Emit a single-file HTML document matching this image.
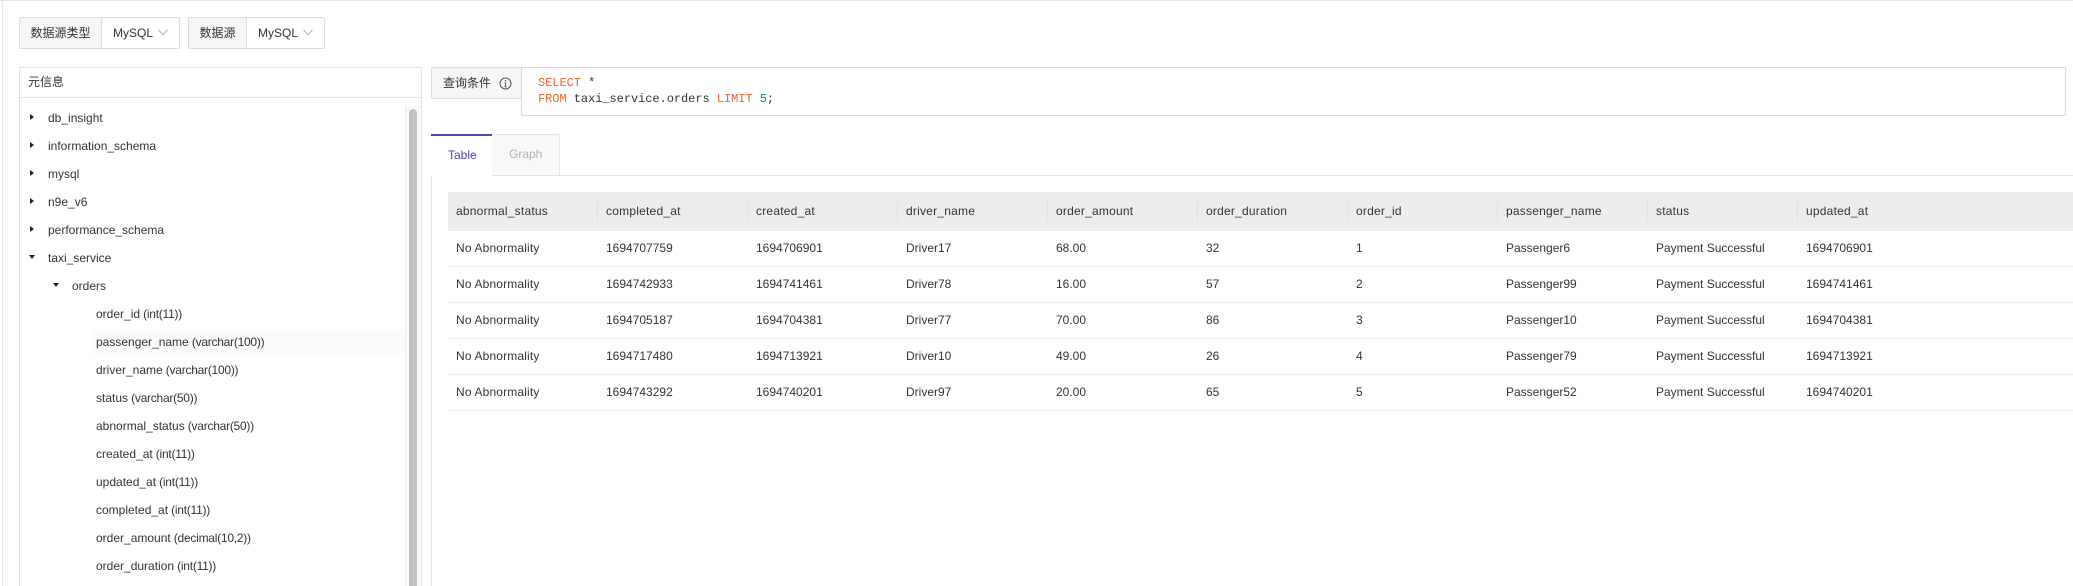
<!DOCTYPE html>
<html lang="zh"><head><meta charset="utf-8"><title>Query</title>
<style>
html,body{margin:0;padding:0;background:#fff;width:2073px;height:586px;overflow:hidden}
body{font-family:"Liberation Sans","Noto Sans CJK SC",sans-serif;font-size:12px;color:#333}
#w{position:absolute;left:0;top:0;width:2073px;height:586px;overflow:hidden;filter:blur(.3px)}
.a{position:absolute;box-sizing:border-box}
.lab{background:#f6f6f6;border:1px solid #dcdce2;border-radius:2px 0 0 2px;line-height:30px;text-align:center;color:#333}
.sel{background:#fff;border:1px solid #dcdce2;border-left:0;border-radius:0 2px 2px 0;line-height:30px;color:#333}
.t{position:absolute;line-height:16px;white-space:nowrap;color:#333}
.t span{letter-spacing:-.25px}
.row{position:absolute;left:448px;width:1625px;display:flex;line-height:16px}
.row div{width:150px;flex:none;padding-left:8px;box-sizing:border-box;white-space:nowrap;color:#333}
.row div:first-child{letter-spacing:.15px}
.row.h div,.row.h div:first-child{letter-spacing:.22px}
.line{position:absolute;left:448px;width:1625px;height:1px;background:#ececee}
.tri-r{position:absolute;width:0;height:0;border-left:4px solid #222;border-top:3.5px solid transparent;border-bottom:3.5px solid transparent}
.tri-d{position:absolute;width:0;height:0;border-top:4px solid #222;border-left:3.5px solid transparent;border-right:3.5px solid transparent}
.sql{position:absolute;left:538px;font-family:"Liberation Mono",monospace;font-size:12px;letter-spacing:-.05px;line-height:16px;white-space:pre;color:#333}
.k{color:#f5622a}.n{color:#1a8a5f}
.dv{position:absolute;top:201px;width:1px;height:20px;background:#e2e2e2}
</style></head><body><div id="w">
<div class="a" style="left:0;top:0;width:2073px;height:1px;background:#e6e6ee"></div>
<div class="a" style="left:2px;top:0;width:1px;height:586px;background:#e6e6ee"></div>

<div class="a lab" style="left:19px;top:17px;width:83px;height:32px">数据源类型</div>
<div class="a sel" style="left:102px;top:17px;width:78px;height:32px;padding-left:11px">MySQL</div>
<svg class="a" style="left:158px;top:29px" width="10" height="7" viewBox="0 0 10 7"><path d="M.5.8 5 5.8 9.500.8" fill="none" stroke="#aaa" stroke-width="1"/></svg>
<div class="a lab" style="left:188px;top:17px;width:59px;height:32px">数据源</div>
<div class="a sel" style="left:247px;top:17px;width:78px;height:32px;padding-left:11px">MySQL</div>
<svg class="a" style="left:303px;top:29px" width="10" height="7" viewBox="0 0 10 7"><path d="M.5.8 5 5.8 9.500.8" fill="none" stroke="#aaa" stroke-width="1"/></svg>

<div class="a" style="left:19px;top:67px;width:403px;height:530px;border:1px solid #e3e3ea"></div>
<div class="a" style="left:20px;top:97px;width:401px;height:1px;background:#e3e3ea"></div>
<div class="t" style="left:28px;top:74px">元信息</div>
<div class="a" style="left:405px;top:106px;width:16px;height:480px;background:#fafafa;border-left:1px solid #ececec"></div>
<div class="a" style="left:409px;top:109px;width:8px;height:490px;background:#c1c1c1;border-radius:4px 4px 0 0"></div>
<div class="a" style="left:92px;top:330px;width:313px;height:24px;background:#fbfbfb"></div>

<div class="tri-r" style="left:30px;top:114px"></div><div class="t" style="left:48px;top:110px">db_insight</div>
<div class="tri-r" style="left:30px;top:142px"></div><div class="t" style="left:48px;top:138px">information_schema</div>
<div class="tri-r" style="left:30px;top:170px"></div><div class="t" style="left:48px;top:166px">mysql</div>
<div class="tri-r" style="left:30px;top:198px"></div><div class="t" style="left:48px;top:194px">n9e_v6</div>
<div class="tri-r" style="left:30px;top:226px"></div><div class="t" style="left:48px;top:222px">performance_schema</div>
<div class="tri-d" style="left:29px;top:255px"></div><div class="t" style="left:48px;top:250px">taxi_service</div>
<div class="tri-d" style="left:53px;top:283px"></div><div class="t" style="left:72px;top:278px">orders</div>
<div class="t" style="left:96px;top:306px">order_id<span> (int(11))</span></div>
<div class="t" style="left:96px;top:334px">passenger_name<span> (varchar(100))</span></div>
<div class="t" style="left:96px;top:362px">driver_name<span> (varchar(100))</span></div>
<div class="t" style="left:96px;top:390px">status<span> (varchar(50))</span></div>
<div class="t" style="left:96px;top:418px">abnormal_status<span> (varchar(50))</span></div>
<div class="t" style="left:96px;top:446px">created_at<span> (int(11))</span></div>
<div class="t" style="left:96px;top:474px">updated_at<span> (int(11))</span></div>
<div class="t" style="left:96px;top:502px">completed_at<span> (int(11))</span></div>
<div class="t" style="left:96px;top:530px">order_amount<span> (decimal(10,2))</span></div>
<div class="t" style="left:96px;top:558px">order_duration<span> (int(11))</span></div>

<div class="a" style="left:431px;top:67px;width:91px;height:32px;background:#f6f6f6;border:1px solid #dcdce2;border-radius:2px 0 0 2px"></div>
<div class="t" style="left:443px;top:75px">查询条件</div>
<svg class="a" style="left:499px;top:77px" width="13" height="13" viewBox="0 0 13 13"><circle cx="6.500" cy="6.500" r="5.500" fill="none" stroke="#555" stroke-width="1"/><path d="M6.500 5.500V9.800M5.500 5.700H6.500M5.400 9.800H7.600" fill="none" stroke="#555" stroke-width=".9"/><circle cx="6.500" cy="3.700" r=".7" fill="#555"/></svg>
<div class="a" style="left:521px;top:67px;width:1545px;height:49px;border:1px solid #d8d8d8;border-radius:2px;background:#fff"></div>
<div class="sql" style="top:75px"><span class="k">SELECT</span> *
<span class="k">FROM</span> taxi_service.orders <span class="k">LIMIT</span> <span class="n">5</span>;</div>

<div class="a" style="left:431px;top:175px;width:1642px;height:1px;background:#e3e3e3"></div>
<div class="a" style="left:431px;top:134px;width:1px;height:452px;background:#e3e3ea"></div>
<div class="a" style="left:431px;top:134px;width:62px;height:42px;background:#fff;border-top:2px solid #5b3fb0;border-right:1px solid #e3e3e3"></div>
<div class="a" style="left:492px;top:134px;width:68px;height:42px;background:#f8f8f8;border:1px solid #e3e3e3;border-left:0;border-radius:0 2px 0 0"></div>
<div class="t" style="left:448px;top:147px;color:#5b3fb0">Table</div>
<div class="t" style="left:509px;top:146px;color:#b0b0b0">Graph</div>

<div class="a" style="left:448px;top:192px;width:1625px;height:39px;background:#ededed"></div>
<div class="dv" style="left:597px"></div><div class="dv" style="left:747px"></div><div class="dv" style="left:897px"></div><div class="dv" style="left:1047px"></div><div class="dv" style="left:1197px"></div><div class="dv" style="left:1347px"></div><div class="dv" style="left:1497px"></div><div class="dv" style="left:1647px"></div><div class="dv" style="left:1797px"></div>
<div class="row h" style="top:203px"><div>abnormal_status</div><div>completed_at</div><div>created_at</div><div>driver_name</div><div>order_amount</div><div>order_duration</div><div>order_id</div><div>passenger_name</div><div>status</div><div>updated_at</div></div>
<div class="row" style="top:240px"><div>No Abnormality</div><div>1694707759</div><div>1694706901</div><div>Driver17</div><div>68.00</div><div>32</div><div>1</div><div>Passenger6</div><div>Payment Successful</div><div>1694706901</div></div>
<div class="line" style="top:266px"></div>
<div class="row" style="top:276px"><div>No Abnormality</div><div>1694742933</div><div>1694741461</div><div>Driver78</div><div>16.00</div><div>57</div><div>2</div><div>Passenger99</div><div>Payment Successful</div><div>1694741461</div></div>
<div class="line" style="top:302px"></div>
<div class="row" style="top:312px"><div>No Abnormality</div><div>1694705187</div><div>1694704381</div><div>Driver77</div><div>70.00</div><div>86</div><div>3</div><div>Passenger10</div><div>Payment Successful</div><div>1694704381</div></div>
<div class="line" style="top:338px"></div>
<div class="row" style="top:348px"><div>No Abnormality</div><div>1694717480</div><div>1694713921</div><div>Driver10</div><div>49.00</div><div>26</div><div>4</div><div>Passenger79</div><div>Payment Successful</div><div>1694713921</div></div>
<div class="line" style="top:374px"></div>
<div class="row" style="top:384px"><div>No Abnormality</div><div>1694743292</div><div>1694740201</div><div>Driver97</div><div>20.00</div><div>65</div><div>5</div><div>Passenger52</div><div>Payment Successful</div><div>1694740201</div></div>
<div class="line" style="top:410px"></div>
</div></body></html>
